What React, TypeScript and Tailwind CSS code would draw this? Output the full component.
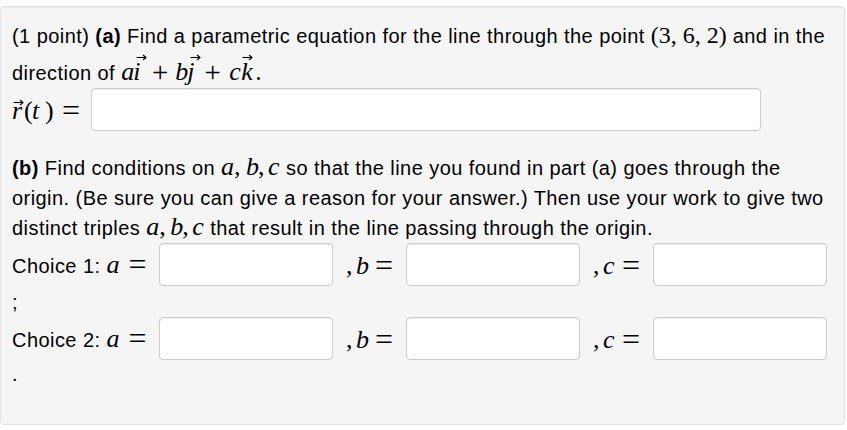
import React from "react";

const math = "font-['Liberation_Serif',serif] text-[26px] leading-none tracking-normal";
const mathSm = "font-['Liberation_Serif',serif] text-[24px] leading-none tracking-normal";

function Arrow({ className }: { className: string }) {
  return (
    <svg className={`absolute ${className}`} width="11" height="7" viewBox="0 0 11 7" fill="none">
      <path d="M0.5 3.5H10" stroke="#000" strokeWidth="1.1" />
      <path d="M7 1L10 3.5L7 6" stroke="#000" strokeWidth="1.1" strokeLinejoin="round" />
    </svg>
  );
}

// one glyph in a box of fixed width, so the math spacing follows the picture
function C({ w, it = false, children }: { w: string; it?: boolean; children: React.ReactNode }) {
  return <span className={`inline-block ${w} ${it ? "italic" : ""}`}>{children}</span>;
}

function Vec({ ch, w, arrow }: { ch: string; w: string; arrow: string }) {
  return (
    <span className={`relative inline-block italic ${w}`}>
      {ch}
      <Arrow className={arrow} />
    </span>
  );
}

function Op({ ch, w }: { ch: string; w: string }) {
  return <span className={`inline-block text-center align-[-2px] text-[29px] ${w}`}>{ch}</span>;
}

function Eq() {
  return <span className="inline-block align-[-2px] text-[32px]">=</span>;
}

function Field({ w }: { w: string }) {
  return (
    <div
      className={`${w} h-[43px] shrink-0 bg-white border border-[#cccccc] rounded-[4px] shadow-[inset_0_1px_1px_rgba(0,0,0,0.075)]`}
    />
  );
}

function Abc({ first }: { first: string }) {
  return (
    <span className={math}>
      <C w="w-[13px]" it>a</C>
      <C w={first}>,</C>
      <C w="w-[12px]" it>b</C>
      <C w="w-[10px]">,</C>
      <C w="w-[12px]" it>c</C>
    </span>
  );
}

function ChoiceRow({ n }: { n: number }) {
  return (
    <div className="flex items-center h-[43px]">
      <span className="w-[147px] shrink-0 whitespace-nowrap">
        Choice {n}:{" "}
        <span className={math}>
          <C w="w-[22px]" it>a</C>
          <Eq />
        </span>
      </span>
      <Field w="w-[174px]" />
      <span className={`w-[73px] shrink-0 pl-[13px] whitespace-nowrap ${math}`}>
        <C w="w-[10px]">,</C>
        <C w="w-[19px]" it>b</C>
        <Eq />
      </span>
      <Field w="w-[174px]" />
      <span className={`w-[73px] shrink-0 pl-[13px] whitespace-nowrap ${math}`}>
        <C w="w-[10px]">,</C>
        <C w="w-[19px]" it>c</C>
        <Eq />
      </span>
      <Field w="w-[174px]" />
    </div>
  );
}

export default function App() {
  return (
    <div className="w-[847px] h-[430px] bg-white overflow-hidden pt-[6px] font-['Liberation_Sans',Arial,sans-serif] text-[20px] tracking-[0.44px] text-black">
      <div className="w-[845px] h-[419px] bg-[#f5f5f5] border border-[#e3e3e3] rounded-[4px] shadow-[inset_0_1px_1px_rgba(0,0,0,0.05)] pl-[11px] pt-[14px]">
        <div className="h-[30px] leading-[30px] whitespace-nowrap">
          (1 point) <b>(a)</b> Find a parametric equation for the line through the point{" "}
          <span className={mathSm}>
            (3,<span className="ml-[6px]">6,</span>
            <span className="ml-[6px]">2)</span>
          </span>{" "}
          and in the
        </div>
        <div className="mt-[7px] h-[30px] leading-[30px] whitespace-nowrap">
          direction of{" "}
          <span className={math}>
            <C w="w-[12px]" it>a</C>
            <Vec ch="i" w="w-[12px]" arrow="left-[3px] -top-[5px]" />
            <Op ch="+" w="w-[30px]" />
            <C w="w-[12px]" it>b</C>
            <Vec ch="j" w="w-[13px]" arrow="left-[3px] -top-[5px]" />
            <Op ch="+" w="w-[25px]" />
            <span className="inline-block w-[4px]" />
            <C w="w-[12px]" it>c</C>
            <Vec ch="k" w="w-[14px]" arrow="left-[1px] -top-[5px]" />
            <span>.</span>
          </span>
        </div>
        <div className="flex items-center h-[43px]">
          <span className={`w-[79px] shrink-0 whitespace-nowrap ${math}`}>
            <Vec ch="r" w="w-[12px]" arrow="left-[1px] top-[1px]" />
            <C w="w-[8px]">(</C>
            <C w="w-[13px]" it>t</C>
            <C w="w-[8px]">)</C>
            <span className="ml-[9px]">
              <Eq />
            </span>
          </span>
          <Field w="w-[670px]" />
        </div>

        <div className="mt-[22px] leading-[30px] whitespace-nowrap">
          <div className="h-[30px]">
            <b>(b)</b> Find conditions on <Abc first="w-[12px]" /> so that the line you found in part (a) goes
            through the
          </div>
          <div className="h-[30px]">
            origin. (Be sure you can give a reason for your answer.) Then use your work to give two
          </div>
          <div className="h-[30px]">
            distinct triples <Abc first="w-[11px]" /> that result in the line passing through the origin.
          </div>
        </div>

        <ChoiceRow n={1} />
        <div className="h-[31px] flex items-center">;</div>
        <ChoiceRow n={2} />
        <div className="h-[29px] leading-[29px]">.</div>
      </div>
    </div>
  );
}
